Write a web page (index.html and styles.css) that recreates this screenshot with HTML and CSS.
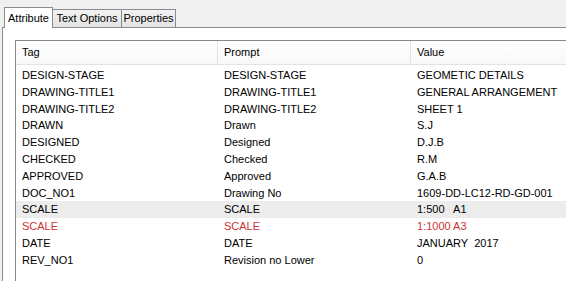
FILE: index.html
```html
<!DOCTYPE html>
<html lang="en">
<head>
    <meta charset="utf-8">
    <title>Attribute</title>
    <link rel="stylesheet" href="styles.css">
</head>
<body>
    <div class="window">
        <!-- Tabs -->
        <div class="tabstrip">
            <div class="tab active tab-attr">Attribute</div>
            <div class="tab tab-text">Text Options</div>
            <div class="tab tab-props">Properties</div>
        </div>

        <div class="panel">
            <div class="listbox">
                <div class="header">
                    <div class="hcell">Tag</div>
                    <div class="hcell">Prompt</div>
                    <div class="hcell last">Value</div>
                </div>
                <div class="rows">
                    <div class="row"><span>DESIGN-STAGE</span><span>DESIGN-STAGE</span><span>GEOMETIC DETAILS</span></div>
                    <div class="row"><span>DRAWING-TITLE1</span><span>DRAWING-TITLE1</span><span>GENERAL ARRANGEMENT</span></div>
                    <div class="row"><span>DRAWING-TITLE2</span><span>DRAWING-TITLE2</span><span>SHEET 1</span></div>
                    <div class="row"><span>DRAWN</span><span>Drawn</span><span>S.J</span></div>
                    <div class="row"><span>DESIGNED</span><span>Designed</span><span>D.J.B</span></div>
                    <div class="row"><span>CHECKED</span><span>Checked</span><span>R.M</span></div>
                    <div class="row"><span>APPROVED</span><span>Approved</span><span>G.A.B</span></div>
                    <div class="row"><span>DOC_NO1</span><span>Drawing No</span><span>1609-DD-LC12-RD-GD-001</span></div>
                    <div class="row hover"><span>SCALE</span><span>SCALE</span><span>1:500&nbsp;&nbsp; A1</span></div>
                    <div class="row red"><span>SCALE</span><span>SCALE</span><span>1:1000 A3</span></div>
                    <div class="row"><span>DATE</span><span>DATE</span><span>JANUARY&nbsp; 2017</span></div>
                    <div class="row"><span>REV_NO1</span><span>Revision no Lower</span><span>0</span></div>
                </div>
            </div>
        </div>
    </div>
</body>
</html>
```

FILE: styles.css
```css
body {
    margin: 0;
    height: 281px;
    overflow: hidden;
    background: #f0f0f0;
    font-family: "Liberation Sans", Arial, sans-serif;
    font-size: 11px;
    color: #000;
}

.window {
    box-sizing: border-box;
    height: 281px;
    display: flex;
    flex-direction: column;
    padding: 7px 0 0 2px;
}

/* Tab strip */
.tabstrip {
    display: flex;
    align-items: flex-start;
    flex: none;
    height: 21px;
    padding-left: 2px;
    margin-bottom: -1px;
    position: relative;
    z-index: 1;
}

.tab {
    box-sizing: border-box;
    height: 18px;
    margin-top: 2px;
    margin-left: -1px;
    border: 1px solid #898c95;
    border-bottom: none;
    background: linear-gradient(#f2f2f2, #e3e3e3);
    line-height: 17px;
    text-align: center;
    white-space: nowrap;
}

.tab.active {
    height: 21px;
    margin-top: 0;
    margin-left: 0;
    background: #fff;
    line-height: 21px;
}

.tab-attr { width: 49px; }
.tab-text { width: 70px; }
.tab-props { width: 55px; }

/* Panel */
.panel {
    flex: 1;
    display: flex;
    min-height: 0;
    border-top: 1px solid #898c95;
    border-left: 1px solid #898c95;
    background: #fff;
    padding: 12px 0 0 12px;
}

.listbox {
    flex: 1;
    border-top: 1px solid #828790;
    border-left: 1px solid #828790;
    background: #fff;
    overflow: hidden;
}

.header {
    display: grid;
    grid-template-columns: 202px 193px 1fr;
    height: 23px;
    border-bottom: 1px solid #e3e3e3;
    background: linear-gradient(#fff, #f7f8f9);
}

.hcell {
    line-height: 22px;
    padding-left: 6px;
    border-right: 1px solid #e3e3e3;
}

.hcell.last {
    border-right: none;
}

.rows {
    padding-top: 2px;
}

.row {
    display: grid;
    grid-template-columns: 202px 193px 1fr;
    height: 16.8px;
    line-height: 16.8px;
    white-space: nowrap;
}

.row span {
    padding-left: 6px;
}

.row.hover {
    background: #ececec;
}

.row.red {
    color: #cc3333;
}
```
